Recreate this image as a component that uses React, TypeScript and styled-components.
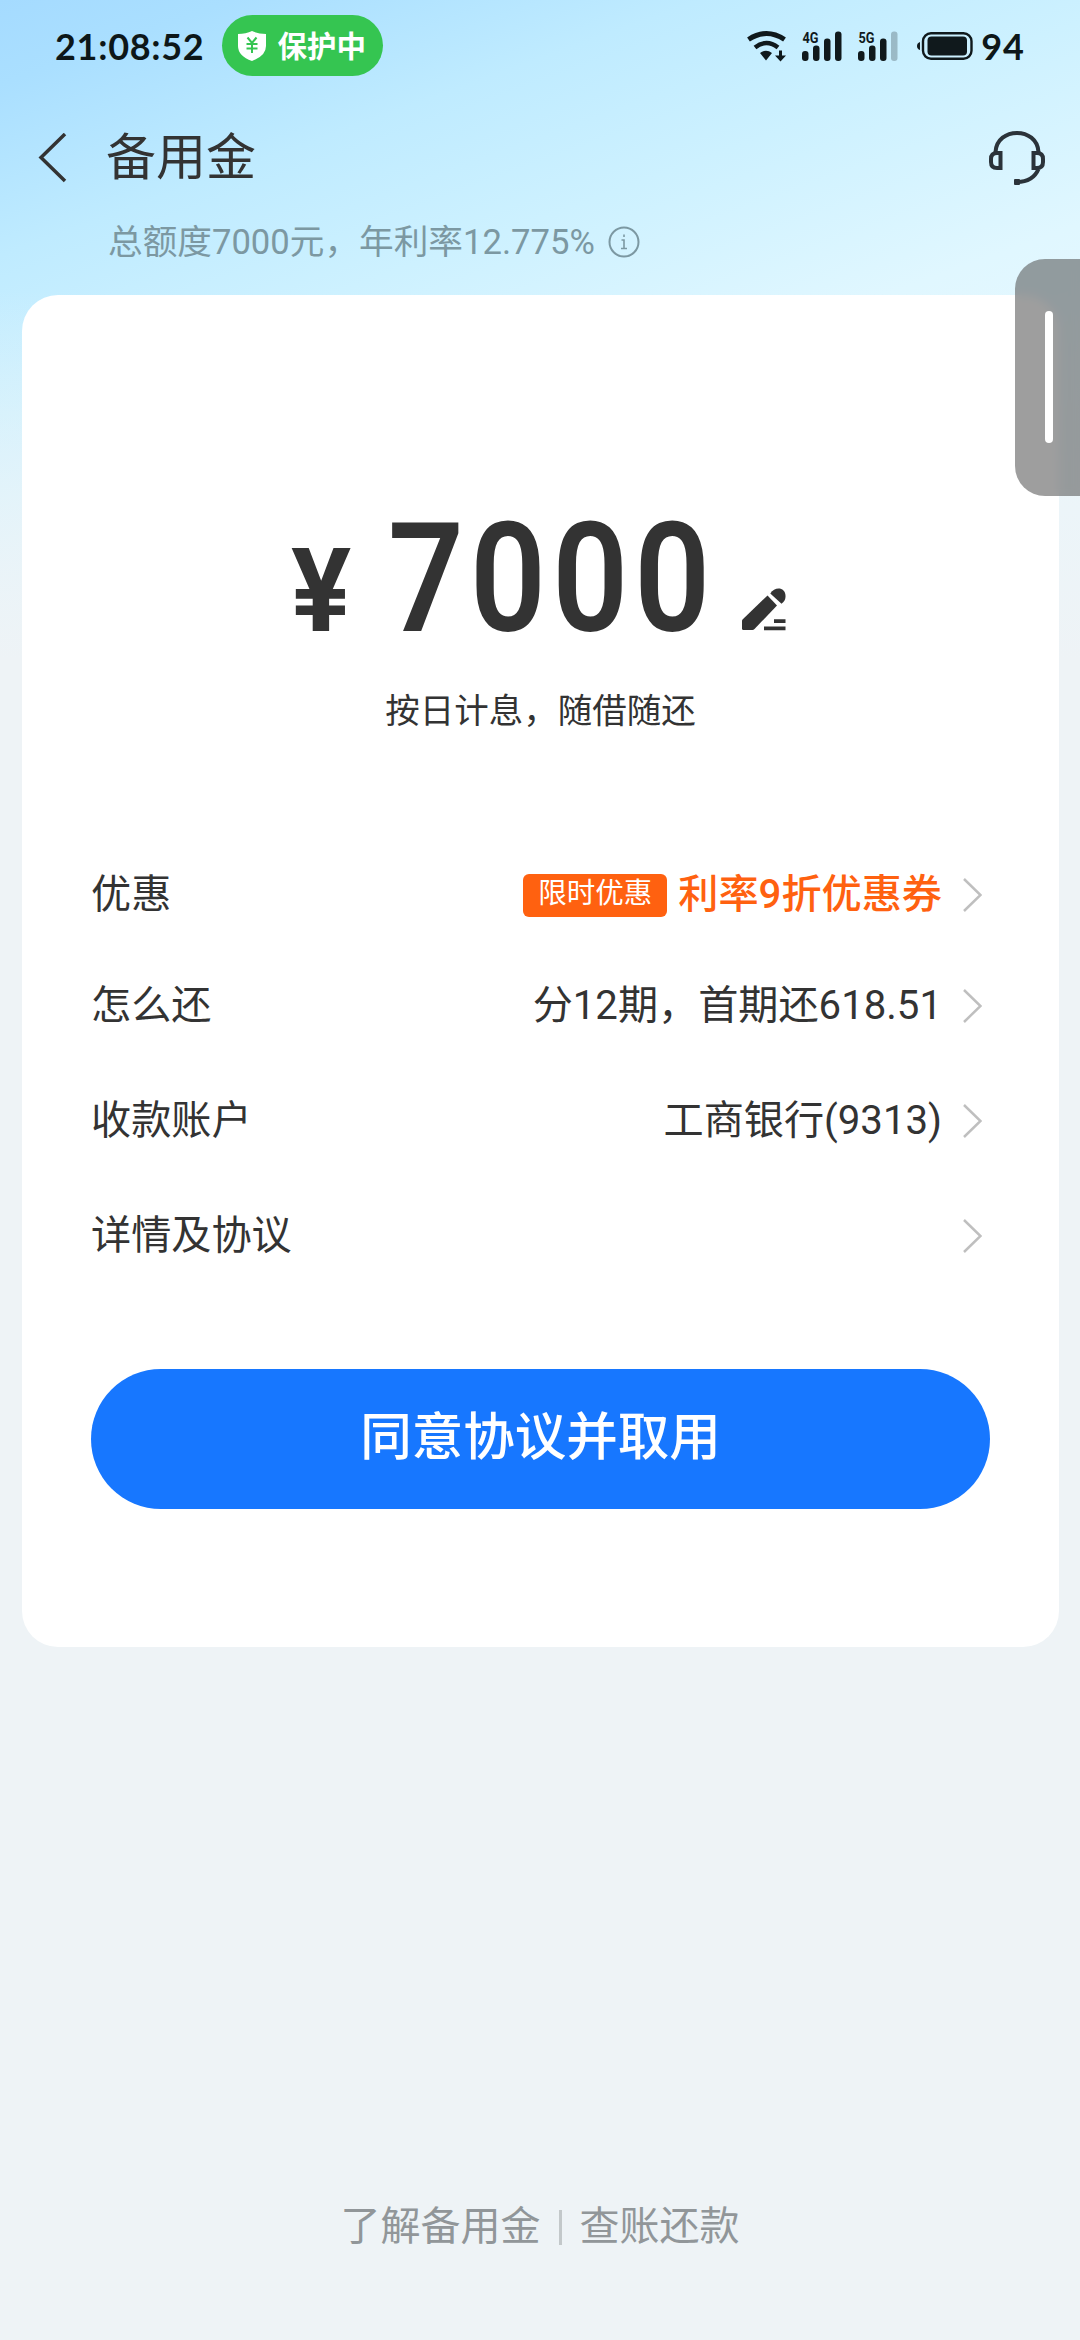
import React from 'react';
import styled, { createGlobalStyle } from 'styled-components';

const Global = createGlobalStyle`
  * { box-sizing: border-box; }
  html, body { margin: 0; padding: 0; background: #eef3f6; }
  body { font-family: Roboto, "Noto Sans CJK SC", sans-serif; color: #333; }
`;

const Screen = styled.div`
  width: 1080px;
  height: 2340px;
  display: flex;
  flex-direction: column;
  overflow: hidden;
  background:
    linear-gradient(180deg, rgba(238,243,246,0) 0, rgba(238,243,246,0) 290px, #eef3f6 660px),
    linear-gradient(160deg, #a5dbff 0, #aadfff 80px, #bfebff 240px, #cdf1ff 390px, #e0f7ff 580px, #e9f8fd 800px);
`;

const StatusBar = styled.header`
  height: 91px;
  display: flex;
  align-items: center;
  padding: 0 55px 0 55px;
`;

const StatusText = styled.span<{ $spacing: number }>`
  font: 700 36px/40px Lato, sans-serif;
  color: #0d1719;
  letter-spacing: ${p => p.$spacing}px;
`;

const Guard = styled.div`
  width: 161px;
  height: 61px;
  margin-left: 18px;
  padding: 0 16px;
  display: flex;
  align-items: center;
  gap: 11px;
  border-radius: 31px;
  background: #35c551;
  color: #fff;
  font: 700 29.5px/40px "Noto Sans CJK SC", sans-serif;
  white-space: nowrap;
`;

const GuardText = styled.span`
  padding-bottom: 3px;
`;

const StatusIcons = styled.div`
  display: flex;
  align-items: center;
  margin-left: auto;
`;

const Signals = styled.div`
  display: flex;
  gap: 12px;
  margin: 0 17px 0 13px;
`;

const BatteryGroup = styled.div`
  display: flex;
  align-items: center;
  gap: 8px;
`;

const Nav = styled.nav`
  height: 133px;
  display: flex;
  align-items: center;
  padding: 0 34px 0 36px;
`;

const Title = styled.h1`
  margin: 0 auto 0 38px;
  font-size: 50px;
  line-height: 70px;
  font-weight: 400;
`;

const Subtitle = styled.div`
  height: 71px;
  padding: 0 0 35px 108px;
  display: flex;
  align-items: center;
  gap: 13px;
  color: #7c98a2;
  font-size: 34.65px;
  line-height: 35px;
`;

const Card = styled.main`
  width: 1037px;
  height: 1352px;
  margin-left: 22px;
  padding: 224px 69px 0;
  border-radius: 36px;
  background: #fff;
  display: flex;
  flex-direction: column;
`;

const AmountRow = styled.div`
  display: flex;
  align-items: baseline;
  height: 120px;
  padding-left: 200px;
  font-weight: 700;
  line-height: 120px;
`;

const Yen = styled.span`
  width: 97px;
  font-size: 117px;
  transform: scaleX(0.96);
  transform-origin: left;
`;

const Amount = styled.span`
  width: 354px;
  font-size: 152px;
  font-weight: 600;
  letter-spacing: 7px;
  white-space: nowrap;
  transform: scaleX(0.875);
  transform-origin: left;
`;

const EditIcon = styled.svg`
  align-self: flex-end;
  margin-bottom: 8px;
`;

const Note = styled.p`
  margin: 47px 0 0;
  text-align: center;
  font-size: 34.5px;
  line-height: 50px;
`;

const List = styled.div`
  margin-top: 105px;
  display: flex;
  flex-direction: column;
`;

const Row = styled.div<{ $height: number }>`
  height: ${p => p.$height}px;
  display: flex;
  align-items: center;
  font-size: 40.15px;
  line-height: 60px;
  padding-right: 8px;
`;

const Label = styled.span`
  margin-right: auto;
`;

const Tag = styled.span`
  width: 144px;
  height: 43px;
  margin-right: 11px;
  border-radius: 6px;
  background: #ff6110;
  color: #fff;
  font-size: 28.5px;
  line-height: 39px;
  text-align: center;
`;

const Value = styled.span<{ $hot?: boolean }>`
  margin-right: 21px;
  color: ${p => (p.$hot ? '#ff6110' : '#333')};
  font-weight: ${p => (p.$hot ? 500 : 400)};
`;

const Submit = styled.button`
  width: 899px;
  height: 140px;
  margin-top: 76px;
  padding: 0 0 2px;
  border: 0;
  border-radius: 70px;
  background: #1777ff;
  color: #fff;
  font: 500 51.5px/70px Roboto, "Noto Sans CJK SC", sans-serif;
`;

const Footer = styled.footer`
  margin: auto 0 83px;
  display: flex;
  justify-content: center;
  align-items: center;
  gap: 18px;
  color: #919699;
  font-size: 40px;
  line-height: 60px;
`;

const Divider = styled.i`
  width: 3px;
  height: 35px;
  background: #c3c8ca;
`;

const SideHandle = styled.aside`
  position: absolute;
  left: 1015px;
  top: 259px;
  width: 65px;
  height: 237px;
  padding: 52px 0 0 30px;
  border-radius: 30px 0 0 30px;
  background: rgba(84, 84, 84, 0.57);
  backdrop-filter: blur(5px);
`;

const HandleBar = styled.div`
  width: 8px;
  height: 132px;
  border-radius: 4px;
  background: #fff;
`;

const Arrow = () => (
  <svg width="19" height="34" viewBox="0 0 19 34" fill="none" stroke="#bfbfbf" strokeWidth="2.5">
    <path d="M1 1 17.5 17 1 33" />
  </svg>
);

const Signal = ({ label, weak }: { label: string; weak?: boolean }) => (
  <svg width="44" height="42" viewBox="-2 -6 44 42" fill="#10191c">
    <text x="0.5" y="11.5" fontFamily="Roboto, sans-serif" fontSize="14.5" fontWeight="700" textLength="16" lengthAdjust="spacingAndGlyphs">{label}</text>
    <rect x="0" y="20" width="6.5" height="10" rx="3" />
    <rect x="11" y="14.500" width="6.500" height="15.500" rx="3" />
    <rect x="22" y="7.500" width="6.500" height="22.500" rx="3" />
    <rect x="33" y="0.500" width="6.500" height="29.500" rx="3" opacity={weak ? 0.25 : 1} />
  </svg>
);

export default function App() {
  return (
    <Screen>
      <Global />
      <StatusBar>
        <StatusText $spacing={0.7}>21:08:52</StatusText>
        <Guard>
          <svg width="28" height="30" viewBox="0 0 28 30">
            <path d="M14 0Q20 3 28 3V15Q28 25 14 30Q0 25 0 15V3Q8 3 14 0Z" fill="#fff" />
            <path d="M9.500 6.500 14 12 18.500 6.500M8.500 13H19.500M8.500 17.500H19.500M14 12V22" fill="none" stroke="#35c551" strokeWidth="2" />
          </svg>
          <GuardText>保护中</GuardText>
        </Guard>
        <StatusIcons>
          <svg width="40" height="32" viewBox="0 0 40 32" fill="#10191c">
            <path d="M1.500 9.500Q19.500-2.500 37.500 9.500" fill="none" stroke="#10191c" strokeWidth="5" />
            <path d="M8 17.500Q19.500 8.500 31 17.500" fill="none" stroke="#10191c" strokeWidth="4.500" />
            <path d="M13 23Q19 18.500 25 23L19 30.500ZM32 20.500H35V25.500H39L33.500 31.500 28 25.500H32Z" />
          </svg>
          <Signals>
            <Signal label="4G" />
            <Signal label="5G" weak />
          </Signals>
          <BatteryGroup>
            <svg width="56" height="28" viewBox="0 0 56 28" fill="#10191c">
              <path d="M3 10Q0 11 0 14T3 18Z" />
              <rect x="6" y="1.200" width="48.500" height="25.600" rx="8" fill="none" stroke="#10191c" strokeWidth="2.400" />
              <rect x="10.500" y="4.500" width="39.500" height="19" rx="4" />
            </svg>
            <StatusText $spacing={1}>94</StatusText>
          </BatteryGroup>
        </StatusIcons>
      </StatusBar>
      <Nav>
        <svg width="32" height="50" viewBox="0 0 32 50" fill="none" stroke="#333" strokeWidth="3.500">
          <path d="M29 1 5 24.500 29 48" />
        </svg>
        <Title>备用金</Title>
        <svg width="58" height="56" viewBox="0 0 58 56" fill="none" stroke="#2b333a" strokeWidth="4">
          <path d="M7.500 22C9 -3.500 49 -3.500 50.500 22" />
          <path d="M12.500 23H9Q3 23 3 29V32Q3 38 9 38H12.500Z" />
          <path d="M45.500 23H49Q55 23 55 29V32Q55 38 49 38H45.500Z" />
          <path d="M50.500 39Q45 52 29 52" />
          <rect x="26" y="49" width="6" height="6" rx="1" fill="#2b333a" stroke="none" />
        </svg>
      </Nav>
      <Subtitle>
        总额度7000元，年利率12.775%
        <svg width="32" height="32" viewBox="0 0 32 32" fill="none" stroke="#7c98a2" strokeWidth="2">
          <circle cx="16" cy="16" r="14.500" />
          <path d="M16 8.500V11M13.500 14H16V22.500M13 22.500H19" strokeWidth="1.600" />
        </svg>
      </Subtitle>
      <Card>
        <AmountRow>
          <Yen>¥</Yen>
          <Amount>7000</Amount>
          <EditIcon width="44" height="44" viewBox="0 0 44 44" fill="#333">
            <path d="M0 34Q0 33 .8 32.200L25.500 8.500 35 18.500 12.500 42Q11.500 43 10.500 43H1.500Q0 43 0 41.500Z" />
            <path d="M28.300 6.500C33 -1 44 0 43.500 10Q43.300 14 39.500 16.800Z" />
            <path d="M32 32.300H43.500V36H32ZM22 39.500H43.500V43.200H22Z" />
          </EditIcon>
        </AmountRow>
        <Note>按日计息，随借随还</Note>
        <List>
          <Row $height={108}><Label>优惠</Label><Tag>限时优惠</Tag><Value $hot>利率9折优惠券</Value><Arrow /></Row>
          <Row $height={114}><Label>怎么还</Label><Value>分12期，首期还618.51</Value><Arrow /></Row>
          <Row $height={115}><Label>收款账户</Label><Value>工商银行(9313)</Value><Arrow /></Row>
          <Row $height={115}><Label>详情及协议</Label><Arrow /></Row>
        </List>
        <Submit>同意协议并取用</Submit>
      </Card>
      <Footer>了解备用金<Divider />查账还款</Footer>
      <SideHandle><HandleBar /></SideHandle>
    </Screen>
  );
}
